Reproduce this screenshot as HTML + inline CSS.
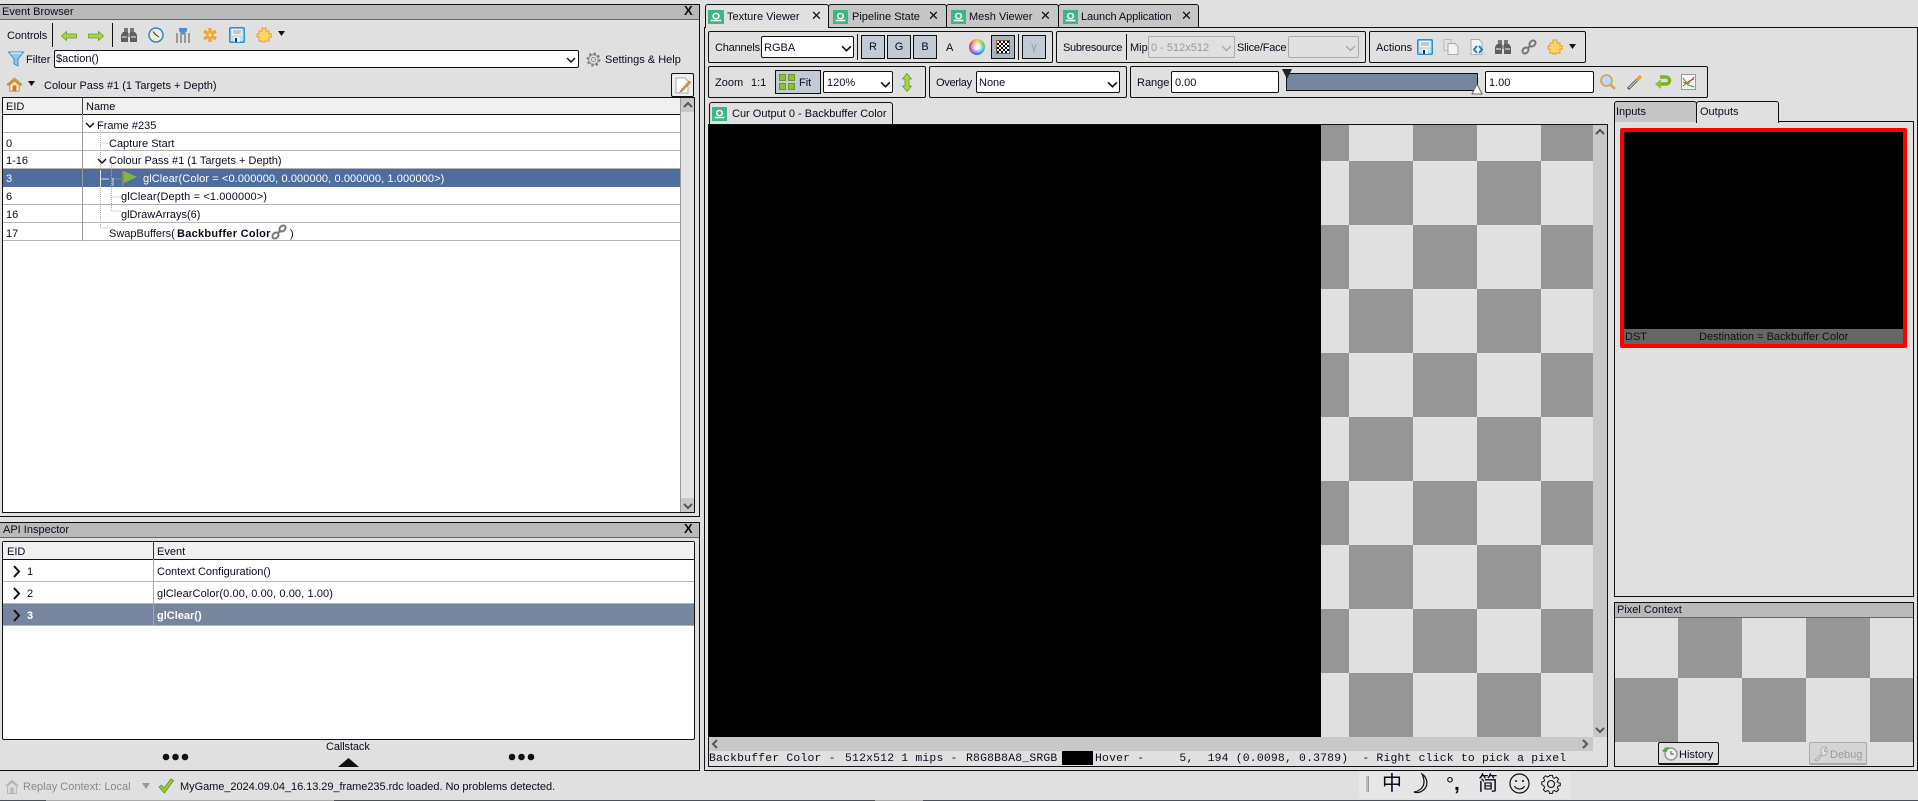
<!DOCTYPE html>
<html><head><meta charset="utf-8"><title>RenderDoc</title>
<style>
html,body{margin:0;padding:0;width:1918px;height:801px;overflow:hidden;background:#e0e0e0}
body{position:relative;font:11px/16px "Liberation Sans","Noto Sans CJK SC",sans-serif;color:#0a0a1e}
div,svg,span.a{position:absolute}
.t{position:absolute;white-space:nowrap;height:16px;line-height:16px}
.m{font:11.4px/16px 'Liberation Mono',monospace;white-space:pre;letter-spacing:.2px}
.b{border:1px solid #111;border-radius:2px;box-sizing:border-box}
.w{background:#fff}
.ln{background:#111}
.title{background:#b9b9b9;border-top:1px solid #111;border-bottom:1px solid #666;box-sizing:border-box}
.tab{box-sizing:border-box;border:1px solid #111;border-bottom:none;border-radius:3px 3px 0 0;background:#c6c6c6}
.act{background:#e0e0e0}
.btn{box-sizing:border-box;border:1px solid #111;background:#c2cad6;text-align:center;line-height:22px}
.sb{background:#c8c8c8}
.rl{background:#b4b4b4;height:1px}
svg{overflow:visible}
</style></head><body>
<svg width="0" height="0" style="left:0;top:0">
<defs>
<symbol id="tabi" viewBox="0 0 14 14" preserveAspectRatio="none"><rect width="14" height="14" fill="#3db585"/><circle cx="7" cy="6" r="2.6" fill="none" stroke="#fff" stroke-width="1.4"/><path d="M2.5 10.5h9" stroke="#fff" stroke-width="1.6"/></symbol>
<symbol id="binoc" viewBox="0 0 16 16"><rect x="3" y="1" width="4" height="4" fill="#777"/><rect x="9" y="1" width="4" height="4" fill="#777"/><path d="M2 5h5v10H0V8zM9 5h5l2 3v7H9z" fill="#5e5e5e"/><rect x="7" y="6" width="2" height="4" fill="#999"/><rect x="1" y="9" width="5" height="2" fill="#aaa"/><rect x="10" y="9" width="5" height="2" fill="#aaa"/></symbol>
<symbol id="clock" viewBox="0 0 16 16"><circle cx="8" cy="8" r="7" fill="#f4ecd0" stroke="#2b88cc" stroke-width="1.5"/><path d="M8 8L5 4.500M8 8l3 2" stroke="#333" fill="none"/></symbol>
<symbol id="marker" viewBox="0 0 16 16"><path d="M2 6v10M6 6v10M10 6v10M14 6v10" stroke="#999" stroke-width="2"/><path d="M4 1h8v3l-4 4-4-4z" fill="#4a8fd0"/></symbol>
<symbol id="aster" viewBox="0 0 16 16"><path d="M8 1v14M2 4l12 8M14 4L2 12" stroke="#f2a535" stroke-width="3.400"/><circle cx="8" cy="8" r="1.500" fill="#fff2c8"/></symbol>
<symbol id="floppy" viewBox="0 0 16 16"><rect x=".75" y=".75" width="14.500" height="14.500" rx="1" fill="#bfe0f5" stroke="#2b8fd6" stroke-width="1.500"/><rect x="3" y="2" width="10" height="6" fill="#f4f4f4"/><path d="M4 4h8M4 6h8" stroke="#999"/><rect x="5" y="10" width="6" height="5" fill="#eee"/><rect x="6" y="11" width="2" height="4" fill="#333"/></symbol>
<symbol id="puzzle" viewBox="0 0 16 16"><path d="M6 1h4v3h3v3h3v3h-3v4H9v1H6v-1H3v-4H1V7h2V4h3z" fill="#ffd566" stroke="#e59a2d"/></symbol>
<symbol id="gear" viewBox="0 0 16 16"><circle cx="8" cy="8" r="6" fill="none" stroke="#777" stroke-width="3" stroke-dasharray="2.200 2.500"/><circle cx="8" cy="8" r="5.200" fill="none" stroke="#888"/><circle cx="8" cy="8" r="2.200" fill="none" stroke="#888"/></symbol>
<symbol id="link" viewBox="0 0 16 16"><g fill="none" stroke="#777" stroke-width="2"><ellipse cx="4.500" cy="11.500" rx="3.400" ry="2.600" transform="rotate(-45 4.500 11.500)"/><ellipse cx="11.500" cy="4.500" rx="3.400" ry="2.600" transform="rotate(-45 11.500 4.500)"/><path d="M6.500 9.500l3-3"/></g></symbol>
<symbol id="home" viewBox="0 0 16 16"><path d="M8 1L0 8l1.500 1L8 3.500 14.500 9 16 8z" fill="#e8a24a" stroke="#a86a20" stroke-width=".6"/><path d="M3 8.500V15h10V8.500L8 4z" fill="#fbe6b8" stroke="#b57a30" stroke-width=".8"/><rect x="6" y="9" width="4" height="6" fill="#c77a28"/></symbol>
<symbol id="dn" viewBox="0 0 10 6"><path d="M1 1l4 4 4-4" fill="none" stroke="#111" stroke-width="1.500"/></symbol>
</defs></svg>

<!-- EVENT BROWSER -->
<div class="title" style="left:0;top:4px;width:700px;height:16px"></div>
<div class="t" style="left:2px;top:4px">Event Browser</div>
<div class="t" style="left:684px;top:3px;font-size:13px;font-weight:bold">X</div>
<div class="ln" style="left:699px;top:4px;width:1px;height:513px"></div>
<div class="ln" style="left:0;top:516px;width:700px;height:1px"></div>

<div class="t" style="left:7px;top:28px;letter-spacing:-.1px">Controls</div>
<div class="ln" style="left:52px;top:23px;width:1px;height:24px"></div>
<div class="ln" style="left:112px;top:23px;width:1px;height:24px"></div>
<svg style="left:61px;top:31px" width="16" height="10" viewBox="0 0 16 10"><path d="M5.500.5v2.500h10v4h-10v2.500L.5 5z" fill="#a8d44a" stroke="#6a9a20" stroke-width=".8"/></svg>
<svg style="left:88px;top:31px" width="16" height="10" viewBox="0 0 16 10"><path d="M10.500.5v2.500H.5v4h10v2.500l5-4.500z" fill="#a8d44a" stroke="#6a9a20" stroke-width=".8"/></svg>
<svg style="left:121px;top:27px" width="16" height="16"><use href="#binoc"/></svg>
<svg style="left:148px;top:27px" width="16" height="16"><use href="#clock"/></svg>
<svg style="left:175px;top:27px" width="16" height="16"><use href="#marker"/></svg>
<svg style="left:202px;top:27px" width="16" height="16"><use href="#aster"/></svg>
<svg style="left:229px;top:27px" width="16" height="16"><use href="#floppy"/></svg>
<svg style="left:256px;top:27px" width="16" height="16"><use href="#puzzle"/></svg>
<svg style="left:278px;top:31px" width="7" height="5"><path d="M0 0h7L3.500 5z" fill="#111"/></svg>

<svg style="left:8px;top:51px" width="16" height="16" viewBox="0 0 16 16"><path d="M.5 1h15L10 8v7l-4-2V8z" fill="#8cc8f0" stroke="#3a8fcc"/><path d="M2 2h12" stroke="#fff"/></svg>
<div class="t" style="left:26px;top:52px">Filter</div>
<div class="b w" style="left:54px;top:50px;width:525px;height:18px"></div>
<div class="t" style="left:56px;top:51px">$action()</div>
<svg style="left:566px;top:57px" width="10" height="6"><use href="#dn"/></svg>
<svg style="left:586px;top:52px" width="15" height="15"><use href="#gear"/></svg>
<div class="t" style="left:605px;top:52px">Settings &amp; Help</div>

<svg style="left:7px;top:77px" width="15" height="15"><use href="#home"/></svg>
<svg style="left:28px;top:81px" width="7" height="5"><path d="M0 0h7L3.500 5z" fill="#111"/></svg>
<div class="t" style="left:44px;top:78px">Colour Pass #1 (1 Targets + Depth)</div>
<div class="b" style="left:671px;top:73px;width:23px;height:24px;background:#eee"></div>
<svg style="left:675px;top:77px" width="16" height="17" viewBox="0 0 16 17"><path d="M1 1h9l3 3v12H1z" fill="#fff" stroke="#aaa"/><path d="M6 13l8-9 1.500 1.500-8 8.500-2.500 1z" fill="#f0a030" stroke="#a86a20" stroke-width=".6"/></svg>

<!-- event table -->
<div class="w" style="left:2px;top:97px;width:678px;height:416px"></div>
<div style="left:2px;top:97px;width:678px;height:17px;background:#efefef"></div>
<div style="left:680px;top:98px;width:14px;height:414px;background:#e4e4e4"></div>
<div class="sb" style="left:681px;top:98px;width:13px;height:14px"></div>
<div class="sb" style="left:681px;top:498px;width:13px;height:14px"></div>
<div style="box-sizing:border-box;left:2px;top:97px;width:693px;height:416px;border:1px solid #111"></div>
<div class="ln" style="left:680px;top:98px;width:1px;height:414px;background:#999"></div>
<div class="ln" style="left:2px;top:114px;width:678px;height:1px"></div>
<div class="rl" style="left:3px;top:132px;width:677px"></div>
<div class="rl" style="left:3px;top:150px;width:677px"></div>
<div class="rl" style="left:3px;top:168px;width:677px"></div>
<div class="rl" style="left:3px;top:186px;width:677px"></div>
<div class="rl" style="left:3px;top:204px;width:677px"></div>
<div class="rl" style="left:3px;top:222px;width:677px"></div>
<div class="rl" style="left:3px;top:240px;width:677px"></div>
<div style="left:3px;top:169px;width:677px;height:18px;background:#4f6d9f"></div>
<div style="left:82px;top:98px;width:1px;height:143px;background:#999"></div>
<div class="ln" style="left:82px;top:98px;width:1px;height:16px;background:#444"></div>
<svg style="left:683px;top:102px" width="10" height="6"><path d="M1 5l4-4 4 4" fill="none" stroke="#555" stroke-width="2"/></svg>
<svg style="left:683px;top:503px" width="10" height="6"><path d="M1 1l4 4 4-4" fill="none" stroke="#555" stroke-width="2"/></svg>
<svg style="left:83px;top:115px" width="60" height="126" fill="none" stroke="#aaa" stroke-width="1" stroke-dasharray="1 1">
<path d="M17.500 9v104M17.500 28h8M17.500 113h8M28.500 46v50M28.500 64h10M28.500 82h10M28.500 96h10"/></svg>
<div class="t" style="left:6px;top:99px">EID</div>
<div class="t" style="left:86px;top:99px">Name</div>
<svg style="left:85px;top:122px" width="10" height="6"><use href="#dn"/></svg>
<div class="t" style="left:97px;top:118px">Frame #235</div>
<div class="t" style="left:6px;top:136px">0</div>
<div class="t" style="left:109px;top:136px">Capture Start</div>
<div class="t" style="left:6px;top:153px">1-16</div>
<svg style="left:97px;top:158px" width="10" height="6"><use href="#dn"/></svg>
<div class="t" style="left:109px;top:153px">Colour Pass #1 (1 Targets + Depth)</div>
<div class="t" style="left:6px;top:171px;color:#fff">3</div>
<svg style="left:100px;top:170px" width="40" height="17"><path d="M.5 0v17M0 9h9M13 8v8" stroke="#ddd"/><path d="M23 1v15" stroke="#b8883a" stroke-width="1.500"/><path d="M24 1l13 6-13 6z" fill="#7fb548"/></svg>
<div class="t" style="left:143px;top:171px;color:#fff;letter-spacing:.1px">glClear(Color = &lt;0.000000, 0.000000, 0.000000, 1.000000&gt;)</div>
<div class="t" style="left:6px;top:189px">6</div>
<div class="t" style="left:121px;top:189px;letter-spacing:.12px">glClear(Depth = &lt;1.000000&gt;)</div>
<div class="t" style="left:6px;top:207px">16</div>
<div class="t" style="left:121px;top:207px">glDrawArrays(6)</div>
<div class="t" style="left:6px;top:226px">17</div>
<div class="t" style="left:109px;top:226px">SwapBuffers(</div>
<div class="t" style="left:177px;top:226px;font-weight:bold;letter-spacing:.28px">Backbuffer Color</div>
<svg style="left:271px;top:224px" width="16" height="16"><use href="#link"/></svg>
<div class="t" style="left:290px;top:226px">)</div>

<!-- API INSPECTOR -->
<div class="title" style="left:0;top:522px;width:700px;height:16px"></div>
<div class="t" style="left:3px;top:522px">API Inspector</div>
<div class="t" style="left:684px;top:521px;font-size:13px;font-weight:bold">X</div>
<div class="ln" style="left:699px;top:522px;width:1px;height:249px"></div>
<div class="ln" style="left:0;top:770px;width:700px;height:1px"></div>
<div class="w b" style="left:2px;top:541px;width:693px;height:199px"></div>
<div style="left:3px;top:542px;width:691px;height:17px;background:#efefef"></div>
<div class="ln" style="left:3px;top:559px;width:691px;height:1px"></div>
<div style="left:3px;top:603px;width:691px;height:22px;background:#76869f"></div>
<div class="rl" style="left:3px;top:581px;width:691px"></div>
<div class="rl" style="left:3px;top:603px;width:691px"></div>
<div class="rl" style="left:3px;top:625px;width:691px"></div>
<div style="left:153px;top:542px;width:1px;height:83px;background:#aaa"></div>
<div style="left:153px;top:542px;width:1px;height:17px;background:#333"></div>
<div class="t" style="left:7px;top:544px">EID</div>
<div class="t" style="left:157px;top:544px">Event</div>
<svg style="left:12px;top:565px" width="8" height="13"><path d="M2 1l5 5.500-5 5.500" fill="none" stroke="#111" stroke-width="2"/></svg>
<div class="t" style="left:27px;top:564px">1</div>
<div class="t" style="left:157px;top:564px">Context Configuration()</div>
<svg style="left:12px;top:587px" width="8" height="13"><path d="M2 1l5 5.500-5 5.500" fill="none" stroke="#111" stroke-width="2"/></svg>
<div class="t" style="left:27px;top:586px">2</div>
<div class="t" style="left:157px;top:586px;letter-spacing:.1px">glClearColor(0.00, 0.00, 0.00, 1.00)</div>
<svg style="left:12px;top:609px" width="8" height="13"><path d="M2 1l5 5.500-5 5.500" fill="none" stroke="#111" stroke-width="2"/></svg>
<div class="t" style="left:27px;top:608px;color:#fff;font-weight:bold">3</div>
<div class="t" style="left:157px;top:608px;color:#fff;font-weight:bold">glClear()</div>

<div class="t" style="left:326px;top:739px;letter-spacing:-.1px">Callstack</div>
<svg style="left:338px;top:758px" width="21" height="9"><path d="M10.500 0L21 9H0z" fill="#111"/></svg>
<svg style="left:162px;top:753px" width="27" height="8" fill="#111"><circle cx="4" cy="4" r="3.300"/><circle cx="13.500" cy="4" r="3.300"/><circle cx="23" cy="4" r="3.300"/></svg>
<svg style="left:508px;top:753px" width="27" height="8" fill="#111"><circle cx="4" cy="4" r="3.300"/><circle cx="13.500" cy="4" r="3.300"/><circle cx="23" cy="4" r="3.300"/></svg>

<!-- STATUS BAR -->
<svg style="left:5px;top:778px" width="14" height="17" viewBox="0 0 16 18" opacity=".55"><path d="M8 1L0 8l1.500 1L8 3.500 14.500 9 16 8z" fill="#999"/><path d="M3 8.500V17h10V8.500L8 4z" fill="#ddd" stroke="#888"/><rect x="6" y="10" width="4" height="7" fill="#999"/></svg>
<div class="t" style="left:23px;top:779px;color:#8a8a8a">Replay Context: Local</div>
<svg style="left:142px;top:783px" width="8" height="6"><path d="M0 0h8L4 6z" fill="#999"/></svg>
<svg style="left:158px;top:778px" width="16" height="16" viewBox="0 0 16 16"><path d="M1 9l2.500-2L6 10l7-9 2.500 1.500L6.500 15z" fill="#9ccc3c" stroke="#5f8a1e" stroke-width=".8"/></svg>
<div class="t" style="left:180px;top:779px;letter-spacing:-.05px">MyGame_2024.09.04_16.13.29_frame235.rdc loaded. No problems detected.</div>

<!-- MAIN TABS -->
<div class="ln" style="left:704px;top:27px;width:1214px;height:1px"></div>
<div class="ln" style="left:704px;top:27px;width:1px;height:744px"></div>
<div class="ln" style="left:1917px;top:27px;width:1px;height:744px"></div>
<div class="ln" style="left:704px;top:770px;width:1214px;height:1px"></div>

<div class="tab act" style="left:705px;top:4px;width:124px;height:24px;border-bottom:none"></div>
<div class="tab" style="left:828px;top:4px;width:119px;height:23px"></div>
<div class="tab" style="left:946px;top:4px;width:113px;height:23px"></div>
<div class="tab" style="left:1058px;top:4px;width:141px;height:23px"></div>
<svg style="left:708px;top:10px" width="16" height="14"><use href="#tabi"/></svg>
<div class="t" style="left:727px;top:9px">Texture Viewer</div>
<div class="t" style="left:811px;top:8px;font-size:13px">✕</div>
<svg style="left:833px;top:10px" width="15" height="14"><use href="#tabi"/></svg>
<div class="t" style="left:852px;top:9px">Pipeline State</div>
<div class="t" style="left:928px;top:8px;font-size:13px">✕</div>
<svg style="left:951px;top:10px" width="15" height="14"><use href="#tabi"/></svg>
<div class="t" style="left:969px;top:9px">Mesh Viewer</div>
<div class="t" style="left:1040px;top:8px;font-size:13px">✕</div>
<svg style="left:1063px;top:10px" width="15" height="14"><use href="#tabi"/></svg>
<div class="t" style="left:1081px;top:9px;letter-spacing:-.1px">Launch Application</div>
<div class="t" style="left:1181px;top:8px;font-size:13px">✕</div>

<!-- TOOLBAR ROW 1 -->
<div class="b" style="left:708px;top:31px;width:345px;height:32px"></div>
<div class="t" style="left:715px;top:40px;letter-spacing:-.2px">Channels</div>
<div class="b w" style="left:761px;top:36px;width:93px;height:22px"></div>
<div class="t" style="left:764px;top:40px">RGBA</div>
<svg style="left:841px;top:45px" width="11" height="7"><use href="#dn"/></svg>
<div class="ln" style="left:857px;top:34px;width:1px;height:26px"></div>
<div class="btn" style="left:861px;top:35px;width:24px;height:24px">R</div>
<div class="btn" style="left:887px;top:35px;width:24px;height:24px">G</div>
<div class="btn" style="left:913px;top:35px;width:24px;height:24px">B</div>
<div class="t" style="left:946px;top:40px">A</div>
<div style="left:969px;top:39px;width:16px;height:16px;border-radius:50%;background:radial-gradient(circle,#f8f8f8 0 18%,rgba(255,255,255,0) 65%),conic-gradient(#e8d040,#60c840,#30b8d8,#3060e0,#a040c8,#e84050,#e8d040)"></div>
<div class="btn" style="left:991px;top:35px;width:24px;height:24px;background:#a8b4c4"></div>
<div style="left:996px;top:40px;width:14px;height:14px;border:1px solid #8a5a20;box-sizing:border-box;background:repeating-conic-gradient(#000 0 25%,#fff 0 50%) 0 0/4px 4px"></div>
<div class="ln" style="left:1018px;top:34px;width:1px;height:26px"></div>
<div class="btn" style="left:1022px;top:35px;width:24px;height:24px;color:#9a9a9a">γ</div>

<div class="b" style="left:1056px;top:31px;width:310px;height:32px"></div>
<div class="t" style="left:1063px;top:40px;letter-spacing:-.3px">Subresource</div>
<div class="ln" style="left:1126px;top:34px;width:1px;height:26px"></div>
<div class="t" style="left:1130px;top:40px">Mip</div>
<div class="b" style="left:1148px;top:36px;width:87px;height:22px;border-color:#aaa;background:#e0e0e0"></div>
<div class="t" style="left:1151px;top:40px;color:#999">0 - 512x512</div>
<svg style="left:1221px;top:45px" width="11" height="7"><path d="M1 1l4.500 4.500L10 1" fill="none" stroke="#aaa" stroke-width="1.500"/></svg>
<div class="t" style="left:1237px;top:40px;letter-spacing:-.2px">Slice/Face</div>
<div class="b" style="left:1288px;top:36px;width:71px;height:22px;border-color:#aaa;background:#e0e0e0"></div>
<svg style="left:1345px;top:45px" width="11" height="7"><path d="M1 1l4.500 4.500L10 1" fill="none" stroke="#aaa" stroke-width="1.500"/></svg>

<div class="b" style="left:1369px;top:31px;width:217px;height:32px"></div>
<div class="t" style="left:1376px;top:40px">Actions</div>
<svg style="left:1417px;top:39px" width="16" height="16"><use href="#floppy"/></svg>
<svg style="left:1443px;top:39px" width="16" height="16" viewBox="0 0 16 16"><path d="M1 .5h7v11H1z" fill="#e4e4e4" stroke="#b8b8b8"/><path d="M5 4.500h7l3 3v8H5z" fill="#f4f4f4" stroke="#aaa"/></svg>
<svg style="left:1469px;top:39px" width="16" height="16" viewBox="0 0 16 16"><path d="M2 .5h8l3 3v12H2z" fill="#f4f4f4" stroke="#aaa"/><path d="M8 7L5 10.500 8 14M10 7l3 3.500-3 3.500" fill="none" stroke="#1e7fc8" stroke-width="2"/></svg>
<svg style="left:1495px;top:39px" width="16" height="16"><use href="#binoc"/></svg>
<svg style="left:1521px;top:39px" width="16" height="16"><use href="#link"/></svg>
<svg style="left:1547px;top:39px" width="16" height="16"><use href="#puzzle"/></svg>
<svg style="left:1569px;top:44px" width="7" height="5"><path d="M0 0h7L3.500 5z" fill="#111"/></svg>

<!-- TOOLBAR ROW 2 -->
<div class="b" style="left:708px;top:66px;width:218px;height:32px"></div>
<div class="t" style="left:715px;top:75px">Zoom</div>
<div class="t" style="left:751px;top:75px">1:1</div>
<div class="btn" style="left:775px;top:70px;width:46px;height:24px;background:#c2cad6"></div>
<svg style="left:779px;top:74px" width="16" height="16" fill="#8fc030" stroke="#5a8a18" stroke-width=".8"><rect x=".5" y=".5" width="6" height="6"/><rect x="9.500" y=".5" width="6" height="6"/><rect x=".5" y="9.500" width="6" height="6"/><rect x="9.500" y="9.500" width="6" height="6"/></svg>
<div class="t" style="left:799px;top:75px">Fit</div>
<div class="b w" style="left:823px;top:71px;width:70px;height:22px"></div>
<div class="t" style="left:827px;top:75px">120%</div>
<svg style="left:880px;top:81px" width="11" height="7"><use href="#dn"/></svg>
<svg style="left:902px;top:73px" width="10" height="19" viewBox="0 0 10 19"><path d="M5 .5L9.500 6H7v7h2.500L5 18.500.5 13H3V6H.5z" fill="#a8d44a" stroke="#6a9a20" stroke-width=".8"/></svg>

<div class="b" style="left:929px;top:66px;width:198px;height:32px"></div>
<div class="t" style="left:936px;top:75px;letter-spacing:-.3px">Overlay</div>
<div class="b w" style="left:976px;top:71px;width:144px;height:22px"></div>
<div class="t" style="left:979px;top:75px">None</div>
<svg style="left:1107px;top:81px" width="11" height="7"><use href="#dn"/></svg>

<div class="b" style="left:1130px;top:66px;width:578px;height:32px"></div>
<div class="t" style="left:1137px;top:75px">Range</div>
<div class="b w" style="left:1171px;top:71px;width:108px;height:22px"></div>
<div class="t" style="left:1175px;top:75px">0.00</div>
<div style="left:1286px;top:73px;width:192px;height:18px;background:#76869f;border:1px solid #111;box-sizing:border-box"></div>
<svg style="left:1282px;top:69px" width="10" height="10"><path d="M0 0h10L5 10z" fill="#222"/></svg>
<svg style="left:1472px;top:84px" width="10" height="10"><path d="M5 0l5 10H0z" fill="#fff" stroke="#666"/></svg>
<div class="b w" style="left:1485px;top:71px;width:109px;height:22px"></div>
<div class="t" style="left:1489px;top:75px">1.00</div>
<svg style="left:1600px;top:74px" width="16" height="16" viewBox="0 0 16 16"><circle cx="6.500" cy="6.500" r="5.500" fill="#b8dcf4" stroke="#e0a040" stroke-width="1.600"/><path d="M10.500 10.500l4.500 4.500" stroke="#e0a040" stroke-width="2.500"/></svg>
<svg style="left:1627px;top:74px" width="16" height="16" viewBox="0 0 16 16"><path d="M1 15L10 6" stroke="#555" stroke-width="3"/><path d="M2 14l8-8" stroke="#ddd"/><path d="M10 6l4-4" stroke="#f0a030" stroke-width="3.500"/></svg>
<svg style="left:1654px;top:74px" width="17" height="16" viewBox="0 0 17 16"><path d="M6 3h6a3.500 3.500 0 0 1 0 7H5" fill="none" stroke="#7fb020" stroke-width="3.500"/><path d="M7 5.500L1 10l6 5z" fill="#8fc030"/></svg>
<svg style="left:1681px;top:74px" width="15" height="16" viewBox="0 0 15 16"><rect x=".5" y=".5" width="14" height="15" fill="#f4f4f4" stroke="#999"/><path d="M2 4l5 7 6 2M2 12l6-5 5-2" fill="none" stroke="#3a9a3a"/><path d="M2 8l5 2 6-7" fill="none" stroke="#d84040"/></svg>

<!-- TEXTURE VIEWER -->
<div class="tab act" style="left:709px;top:102px;width:184px;height:23px"></div>
<svg style="left:712px;top:107px" width="15" height="14"><use href="#tabi"/></svg>
<div class="t" style="left:732px;top:106px">Cur Output 0 - Backbuffer Color</div>
<div style="left:709px;top:125px;width:612px;height:612px;background:#000"></div>
<div style="left:1321px;top:125px;width:272px;height:612px;background:#e0e0e0"></div>
<svg style="left:0;top:0" width="1918" height="801" shape-rendering="crispEdges"><path fill="#969696" d="M1321 125h28v36h-28zM1413 125h64v36h-64zM1541 125h52v36h-52zM1349 161h64v64h-64zM1477 161h64v64h-64zM1321 225h28v64h-28zM1413 225h64v64h-64zM1541 225h52v64h-52zM1349 289h64v64h-64zM1477 289h64v64h-64zM1321 353h28v64h-28zM1413 353h64v64h-64zM1541 353h52v64h-52zM1349 417h64v64h-64zM1477 417h64v64h-64zM1321 481h28v64h-28zM1413 481h64v64h-64zM1541 481h52v64h-52zM1349 545h64v64h-64zM1477 545h64v64h-64zM1321 609h28v64h-28zM1413 609h64v64h-64zM1541 609h52v64h-52zM1349 673h64v64h-64zM1477 673h64v64h-64z"/></svg>
<div class="ln" style="left:708px;top:124px;width:900px;height:1px"></div>
<div class="ln" style="left:1607px;top:124px;width:1px;height:643px"></div>
<div class="ln" style="left:708px;top:124px;width:1px;height:643px"></div>
<div class="ln" style="left:708px;top:766px;width:900px;height:1px"></div>
<div class="sb" style="left:1593px;top:125px;width:14px;height:612px"></div>
<svg style="left:1595px;top:129px" width="10" height="6"><path d="M1 5l4-4 4 4" fill="none" stroke="#555" stroke-width="2"/></svg>
<svg style="left:1595px;top:727px" width="10" height="6"><path d="M1 1l4 4 4-4" fill="none" stroke="#555" stroke-width="2"/></svg>
<div class="sb" style="left:709px;top:737px;width:884px;height:14px"></div>
<svg style="left:712px;top:739px" width="6" height="10"><path d="M5 1L1 5l4 4" fill="none" stroke="#555" stroke-width="2"/></svg>
<svg style="left:1582px;top:739px" width="6" height="10"><path d="M1 1l4 4-4 4" fill="none" stroke="#555" stroke-width="2"/></svg>
<div class="t m" style="left:709px;top:751px">Backbuffer Color -</div>
<div class="t m" style="left:845px;top:751px">512x512 1 mips -</div>
<div class="t m" style="left:966px;top:751px">R8G8B8A8_SRGB</div>
<div style="left:1062px;top:751px;width:31px;height:14px;background:#000"></div>
<div class="t m" style="left:1095px;top:751px">Hover -     5,  194 (0.0098, 0.3789)  - Right click to pick a pixel</div>

<!-- OUTPUTS PANEL -->
<div class="tab" style="left:1614px;top:101px;width:83px;height:21px"></div>
<div class="tab act" style="left:1696px;top:101px;width:83px;height:22px"></div>
<div class="t" style="left:1616px;top:104px">Inputs</div>
<div class="t" style="left:1700px;top:104px">Outputs</div>
<div class="ln" style="left:1778px;top:121px;width:136px;height:1px"></div>
<div class="ln" style="left:1614px;top:121px;width:1px;height:476px"></div>
<div class="ln" style="left:1913px;top:121px;width:1px;height:476px"></div>
<div class="ln" style="left:1614px;top:596px;width:300px;height:1px"></div>
<div style="left:1620px;top:128px;width:287px;height:220px;background:#000;border:4px solid #f00;box-sizing:border-box;border-radius:2px"></div>
<div style="left:1624px;top:329px;width:279px;height:15px;background:#666"></div>
<div class="t" style="left:1625px;top:329px;color:#111">DST</div>
<div class="t" style="left:1699px;top:329px;color:#111">Destination = Backbuffer Color</div>

<!-- PIXEL CONTEXT -->
<div class="title" style="left:1614px;top:602px;width:300px;height:16px"></div>
<div class="t" style="left:1617px;top:602px">Pixel Context</div>
<div class="ln" style="left:1614px;top:602px;width:1px;height:165px"></div>
<div class="ln" style="left:1913px;top:602px;width:1px;height:165px"></div>
<div class="ln" style="left:1614px;top:766px;width:300px;height:1px"></div>
<div style="left:1678px;top:618px;width:64px;height:60px;background:#969696"></div>
<div style="left:1806px;top:618px;width:64px;height:60px;background:#969696"></div>
<div style="left:1615px;top:678px;width:63px;height:64px;background:#969696"></div>
<div style="left:1742px;top:678px;width:64px;height:64px;background:#969696"></div>
<div style="left:1870px;top:678px;width:43px;height:64px;background:#969696"></div>
<div class="b" style="left:1658px;top:742px;width:61px;height:23px;background:#e0e0e0;border-bottom-width:2px"></div>
<svg style="left:1662px;top:746px" width="16" height="15" viewBox="0 0 16 15"><circle cx="9" cy="8" r="6" fill="#eee" stroke="#999" stroke-width="1.500"/><path d="M9 5v3h3" stroke="#555" fill="none"/><path d="M0 5l4-4 1 5z" fill="#5fa820"/><path d="M2 6a5 5 0 0 1 5-4" stroke="#5fa820" stroke-width="2" fill="none"/></svg>
<div class="t" style="left:1679px;top:747px">History</div>
<div class="b" style="left:1809px;top:742px;width:58px;height:23px;border-color:#aaa;background:#d4d4d4;border-bottom-width:2px"></div>
<svg style="left:1814px;top:747px" width="14" height="14" viewBox="0 0 14 14"><path d="M1 13l7-7a3.500 3.500 0 0 1 5-5L10 3l1 2 2-1a3.500 3.500 0 0 1-5 4l-5 6z" fill="#e8e8e8" stroke="#a8a8a8"/></svg>
<div class="t" style="left:1830px;top:747px;color:#9a9a9a">Debug</div>

<!-- IME BAR -->
<div style="left:1359px;top:771px;width:212px;height:28px;background:#e6e6e6"></div>
<div style="left:1366px;top:776px;width:2px;height:16px;background:#bbb;border-right:1px solid #999"></div>
<div class="t" style="left:1382px;top:772px;height:24px;line-height:24px;font-size:20px">中</div>
<svg style="left:1413px;top:773px" width="20" height="22" viewBox="0 0 20 22"><path d="M9 1c6 4 7 13 0 17-2 1.500-5 2-8 1 6-1 10-5 10-10 0-3-1-6-2-8z" fill="none" stroke="#111" stroke-width="1.200"/></svg>
<div class="t" style="left:1446px;top:773px;height:24px;line-height:24px;font-size:20px;font-family:'Liberation Sans'">°<b style="position:relative;top:-1px;font-size:21px">,</b></div>
<div class="t" style="left:1478px;top:772px;height:24px;line-height:24px;font-size:20px">简</div>
<svg style="left:1509px;top:773px" width="21" height="21" viewBox="0 0 21 21" fill="none" stroke="#111" stroke-width="1.200"><circle cx="10.500" cy="10.500" r="9.500"/><circle cx="7" cy="8" r="1" fill="#111" stroke="none"/><circle cx="14" cy="8" r="1" fill="#111" stroke="none"/><path d="M5.500 13c2 4 8 4 10 0"/></svg>
<svg style="left:1541px;top:774px" width="20" height="20" viewBox="0 0 20 20" fill="none" stroke="#111" stroke-width="1.100"><path d="M8.300 1h3.400l.5 2.500 1.700.7 2.200-1.400 2.400 2.400-1.400 2.200.7 1.700 2.500.5v2.800l-2.500.5-.7 1.700 1.400 2.200-2.400 2.400-2.200-1.400-1.700.7-.5 2.500H8.300l-.5-2.500-1.700-.7-2.200 1.400-2.400-2.400 1.400-2.200-.7-1.700L-.3 11V8.200l2.500-.5.7-1.700-1.400-2.200 2.400-2.400 2.200 1.400 1.700-.7z" transform="translate(1 .5) scale(.9)"/><circle cx="10" cy="10" r="3.500"/></svg>

<!-- bottom edge -->
<div style="left:0;top:800px;width:1918px;height:1px;background:#4a5058"></div>
<div style="left:46px;top:800px;width:288px;height:1px;background:#aaa"></div>
<div style="left:875px;top:800px;width:48px;height:1px;background:#aaa"></div>
</body></html>
